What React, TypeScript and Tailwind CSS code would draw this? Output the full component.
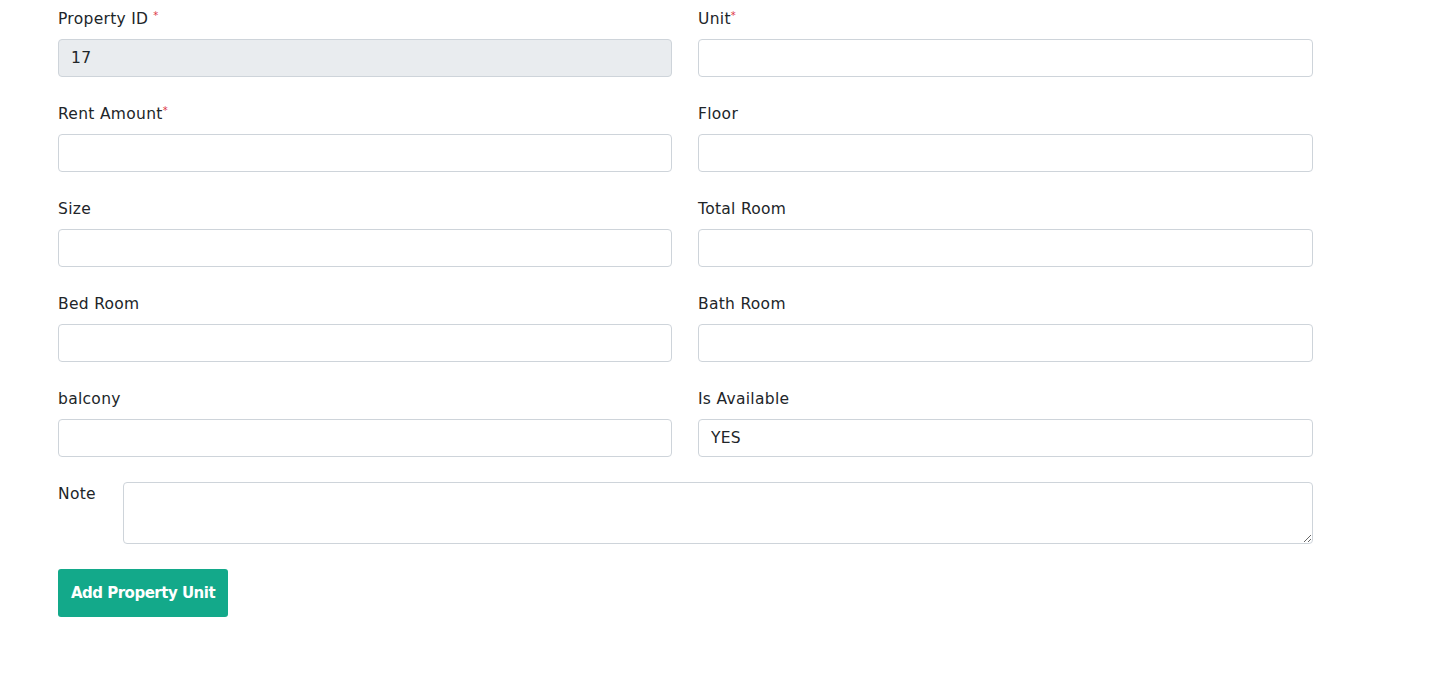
import React from "react";

const font = { fontFamily: '"DejaVu Sans", "Open Sans", sans-serif' };

function Field({ label, req, space, value, disabled }: { label: string; req?: boolean; space?: boolean; value?: string; disabled?: boolean }) {
  return (
    <div className="flex flex-col">
      <label className="h-[24px] text-[15.5px] leading-[24px] tracking-[0.3px] text-[#212529] mb-[8px]">
        {label}
        {req && (
          <sup className={`text-[#dc3545] text-[10px] relative -top-[5px] ${space ? "ml-[5px]" : ""}`}>*</sup>
        )}
      </label>
      <input
        readOnly
        value={value ?? ""}
        className={`h-[38px] w-full rounded-[4px] border border-[#ced4da] px-3 text-[15.5px] tracking-[0.3px] text-[#212529] outline-none ${disabled ? "bg-[#e9ecef]" : "bg-white"}`}
      />
    </div>
  );
}

export default function App() {
  return (
    <div className="bg-white w-[1431px] h-[679px] pl-[58px] pt-[7px]" style={font}>
      <div className="w-[1255px]">
        <div className="grid grid-cols-[614px_615px] gap-x-[26px] gap-y-[25px]">
          <Field label="Property ID" req space value="17" disabled />
          <Field label="Unit" req />
          <Field label="Rent Amount" req />
          <Field label="Floor" />
          <Field label="Size" />
          <Field label="Total Room" />
          <Field label="Bed Room" />
          <Field label="Bath Room" />
          <Field label="balcony" />
          <Field label="Is Available" value="YES" />
        </div>
        <div className="flex mt-[25px]">
          <label className="w-[65px] text-[15.5px] leading-[24px] tracking-[0.3px] text-[#212529]">Note</label>
          <textarea className="flex-1 h-[62px] rounded-[4px] border border-[#ced4da] outline-none px-3 py-1.5" />
        </div>
        <button className="mt-[25px] h-[48px] w-[170px] rounded-[3px] bg-[#13a98a] text-white font-bold text-[15px] tracking-[-0.5px]">
          Add Property Unit
        </button>
      </div>
    </div>
  );
}
